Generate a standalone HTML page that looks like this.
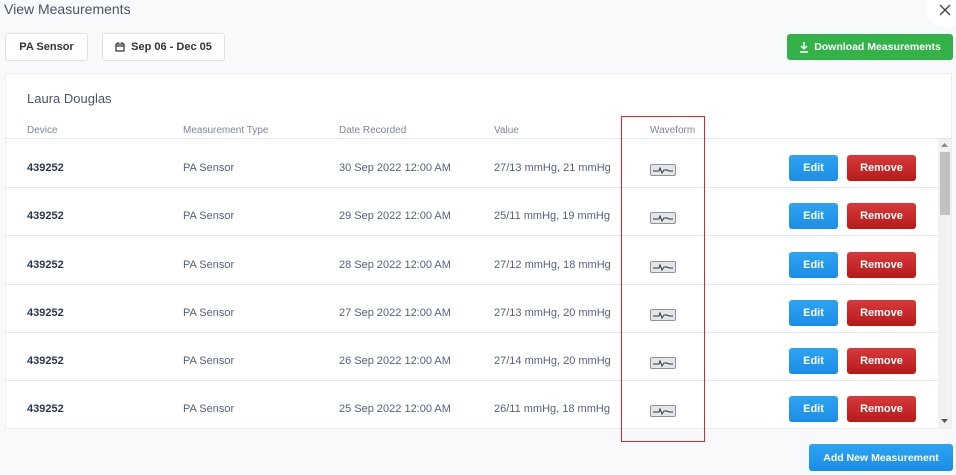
<!DOCTYPE html>
<html><head><style>
body{margin:0;width:956px;height:475px;background:#f8f9fb;font-family:"Liberation Sans",sans-serif;position:relative;overflow:hidden;color:#2d3748}
.a{position:absolute}
.btn{position:absolute;border-radius:3px;font-size:11px;font-weight:bold;display:flex;align-items:center;justify-content:center;box-sizing:border-box}
.w{background:#fff;border:1px solid #dde1e6;color:#333}
.row{position:absolute;left:0;width:933px;height:48px;border-bottom:1px solid #e6e8eb;font-size:11px;color:#56627a}
.row span{position:absolute;top:23px}
.edit{background:linear-gradient(#2ea3f2,#1a8ee6);color:#fff;width:49px;height:26px;left:784px;top:16px}
.rem{background:linear-gradient(#d63a3a,#b81a1a);color:#fff;width:69px;height:26px;left:842px;top:16px}
.hd{position:absolute;top:125px;font-size:10px;color:#7a8699}
</style></head><body>
<div class="a" style="left:4px;top:1px;font-size:14px;color:#4a5568">View Measurements</div>
<div class="a" style="left:926px;top:-12px;width:40px;height:40px;border-radius:50%;background:#fff"></div>
<svg class="a" style="left:939px;top:4px" width="12" height="12"><path d="M1 1L11 11M11 1L1 11" stroke="#444" stroke-width="1.4"/></svg>
<div class="btn w" style="left:5px;top:33px;width:83px;height:28px">PA Sensor</div>
<div class="btn w" style="left:102px;top:33px;width:123px;height:28px"><svg width="10" height="10" style="margin-right:6px"><rect x="1" y="2" width="8" height="7" fill="none" stroke="#333" stroke-width="1.2"/><path d="M1 4H9M3 0V2M7 0V2" stroke="#333" stroke-width="1.2"/></svg>Sep 06 - Dec 05</div>
<div class="btn" style="left:787px;top:34px;width:166px;height:26px;background:#34b24a;color:#fff;font-size:10.5px"><svg width="10" height="11" style="margin-right:5px"><path d="M5 0V7M2 4L5 7L8 4M1 10H9" stroke="#fff" stroke-width="1.4" fill="none"/></svg>Download Measurements</div>
<div class="a" style="left:5px;top:73px;width:947px;height:356px;background:#fff;border:1px solid #eceef1;box-sizing:border-box"></div>
<div class="a" style="left:27px;top:91px;font-size:13px;color:#4a5568">Laura Douglas</div>
<div class="hd" style="left:27px">Device</div><div class="hd" style="left:183px">Measurement Type</div><div class="hd" style="left:339px">Date Recorded</div><div class="hd" style="left:494px">Value</div><div class="hd" style="left:650px">Waveform</div>
<div class="a" style="left:5px;top:138px;width:947px;height:1px;background:#e2e5e9"></div>
<div class="a" style="left:5px;top:139px;width:947px;height:289px;overflow:hidden">
<div style="position:relative">
<div class="row" style="top:0"><span style="left:22px;font-weight:bold;color:#2d3748">439252</span><span style="left:178px">PA Sensor</span><span style="left:334px">30 Sep 2022 12:00 AM</span><span style="left:489px">27/13 mmHg, 21 mmHg</span><svg style="position:absolute;left:645px;top:25px" width="26" height="12"><rect x=".5" y=".5" width="25" height="11" rx="1.5" fill="#e3e7ea" stroke="#8a939b"/><path d="M3 7H9L10 4L12 9L14 6H17L19 7H23" stroke="#333" fill="none"/></svg><div class="btn edit">Edit</div><div class="btn rem">Remove</div></div>
<div class="row" style="top:48px"><span style="left:22px;font-weight:bold;color:#2d3748">439252</span><span style="left:178px">PA Sensor</span><span style="left:334px">29 Sep 2022 12:00 AM</span><span style="left:489px">25/11 mmHg, 19 mmHg</span><svg style="position:absolute;left:645px;top:25px" width="26" height="12"><rect x=".5" y=".5" width="25" height="11" rx="1.5" fill="#e3e7ea" stroke="#8a939b"/><path d="M3 7H9L10 4L12 9L14 6H17L19 7H23" stroke="#333" fill="none"/></svg><div class="btn edit">Edit</div><div class="btn rem">Remove</div></div>
<div class="row" style="top:97px"><span style="left:22px;font-weight:bold;color:#2d3748">439252</span><span style="left:178px">PA Sensor</span><span style="left:334px">28 Sep 2022 12:00 AM</span><span style="left:489px">27/12 mmHg, 18 mmHg</span><svg style="position:absolute;left:645px;top:25px" width="26" height="12"><rect x=".5" y=".5" width="25" height="11" rx="1.5" fill="#e3e7ea" stroke="#8a939b"/><path d="M3 7H9L10 4L12 9L14 6H17L19 7H23" stroke="#333" fill="none"/></svg><div class="btn edit">Edit</div><div class="btn rem">Remove</div></div>
<div class="row" style="top:145px"><span style="left:22px;font-weight:bold;color:#2d3748">439252</span><span style="left:178px">PA Sensor</span><span style="left:334px">27 Sep 2022 12:00 AM</span><span style="left:489px">27/13 mmHg, 20 mmHg</span><svg style="position:absolute;left:645px;top:25px" width="26" height="12"><rect x=".5" y=".5" width="25" height="11" rx="1.5" fill="#e3e7ea" stroke="#8a939b"/><path d="M3 7H9L10 4L12 9L14 6H17L19 7H23" stroke="#333" fill="none"/></svg><div class="btn edit">Edit</div><div class="btn rem">Remove</div></div>
<div class="row" style="top:193px"><span style="left:22px;font-weight:bold;color:#2d3748">439252</span><span style="left:178px">PA Sensor</span><span style="left:334px">26 Sep 2022 12:00 AM</span><span style="left:489px">27/14 mmHg, 20 mmHg</span><svg style="position:absolute;left:645px;top:25px" width="26" height="12"><rect x=".5" y=".5" width="25" height="11" rx="1.5" fill="#e3e7ea" stroke="#8a939b"/><path d="M3 7H9L10 4L12 9L14 6H17L19 7H23" stroke="#333" fill="none"/></svg><div class="btn edit">Edit</div><div class="btn rem">Remove</div></div>
<div class="row" style="top:241px"><span style="left:22px;font-weight:bold;color:#2d3748">439252</span><span style="left:178px">PA Sensor</span><span style="left:334px">25 Sep 2022 12:00 AM</span><span style="left:489px">26/11 mmHg, 18 mmHg</span><svg style="position:absolute;left:645px;top:25px" width="26" height="12"><rect x=".5" y=".5" width="25" height="11" rx="1.5" fill="#e3e7ea" stroke="#8a939b"/><path d="M3 7H9L10 4L12 9L14 6H17L19 7H23" stroke="#333" fill="none"/></svg><div class="btn edit">Edit</div><div class="btn rem">Remove</div></div>
</div></div>
<div class="a" style="left:938px;top:139px;width:13px;height:289px;background:#f1f1f1"></div>
<div class="a" style="left:940px;top:152px;width:10px;height:63px;background:#c1c1c1"></div>
<svg class="a" style="left:941px;top:143px" width="7" height="5"><path d="M0 4L3.5 0L7 4Z" fill="#888"/></svg>
<svg class="a" style="left:941px;top:419px" width="7" height="5"><path d="M0 0L3.5 4L7 0Z" fill="#555"/></svg>
<div class="a" style="left:621px;top:116px;width:84px;height:326px;border:1px solid #e8242a;box-sizing:border-box"></div>
<div class="btn" style="left:809px;top:444px;width:144px;height:27px;background:linear-gradient(#2ea3f2,#1a8ee6);color:#fff;font-size:10.5px">Add New Measurement</div>
</body></html>
